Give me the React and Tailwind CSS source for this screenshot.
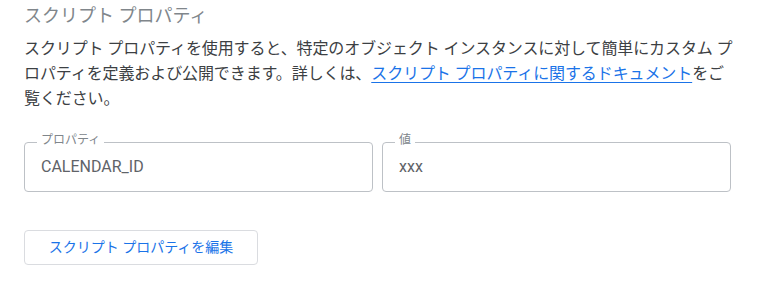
const font = { fontFamily: 'Roboto, "Noto Sans CJK JP", sans-serif' };

function OutlinedField({ label, value }) {
  return (
    <div className="relative flex h-[50px] items-center rounded-[4px] border border-[#bdc1c6] px-4">
      <span className="absolute -top-[11px] left-3 bg-white px-1 text-[12px] leading-4 text-[#80868b]">
        {label}
      </span>
      <span className="text-[16px] text-[#5f6368]">{value}</span>
    </div>
  );
}

export default function App() {
  return (
    <div className="bg-white pl-6 pr-2" style={font}>
      <h2 className="mt-1 text-[18px] font-normal leading-6 text-[#80868b]">
        スクリプト プロパティ
      </h2>
      <p className="mt-2 text-[16px] leading-[25px] tracking-[-0.1px] text-[#3c4043] whitespace-nowrap">
        スクリプト プロパティを使用すると、特定のオブジェクト インスタンスに対して簡単にカスタム プ
        <br />
        ロパティを定義および公開できます。詳しくは、
        <a href="#" className="text-[#1a73e8] underline underline-offset-[3px]">
          スクリプト プロパティに関するドキュメント
        </a>
        をご
        <br />
        覧ください。
      </p>
      <div className="mt-[31px] grid w-[707px] grid-cols-2 gap-[9px]">
        <OutlinedField label="プロパティ" value="CALENDAR_ID" />
        <OutlinedField label="値" value="xxx" />
      </div>
      <button className="mt-[38px] mb-4 flex h-[35px] w-[234px] items-center justify-center rounded-[4px] border border-[#dadce0] bg-white text-[14px] text-[#1a73e8]">
        スクリプト プロパティを編集
      </button>
    </div>
  );
}
